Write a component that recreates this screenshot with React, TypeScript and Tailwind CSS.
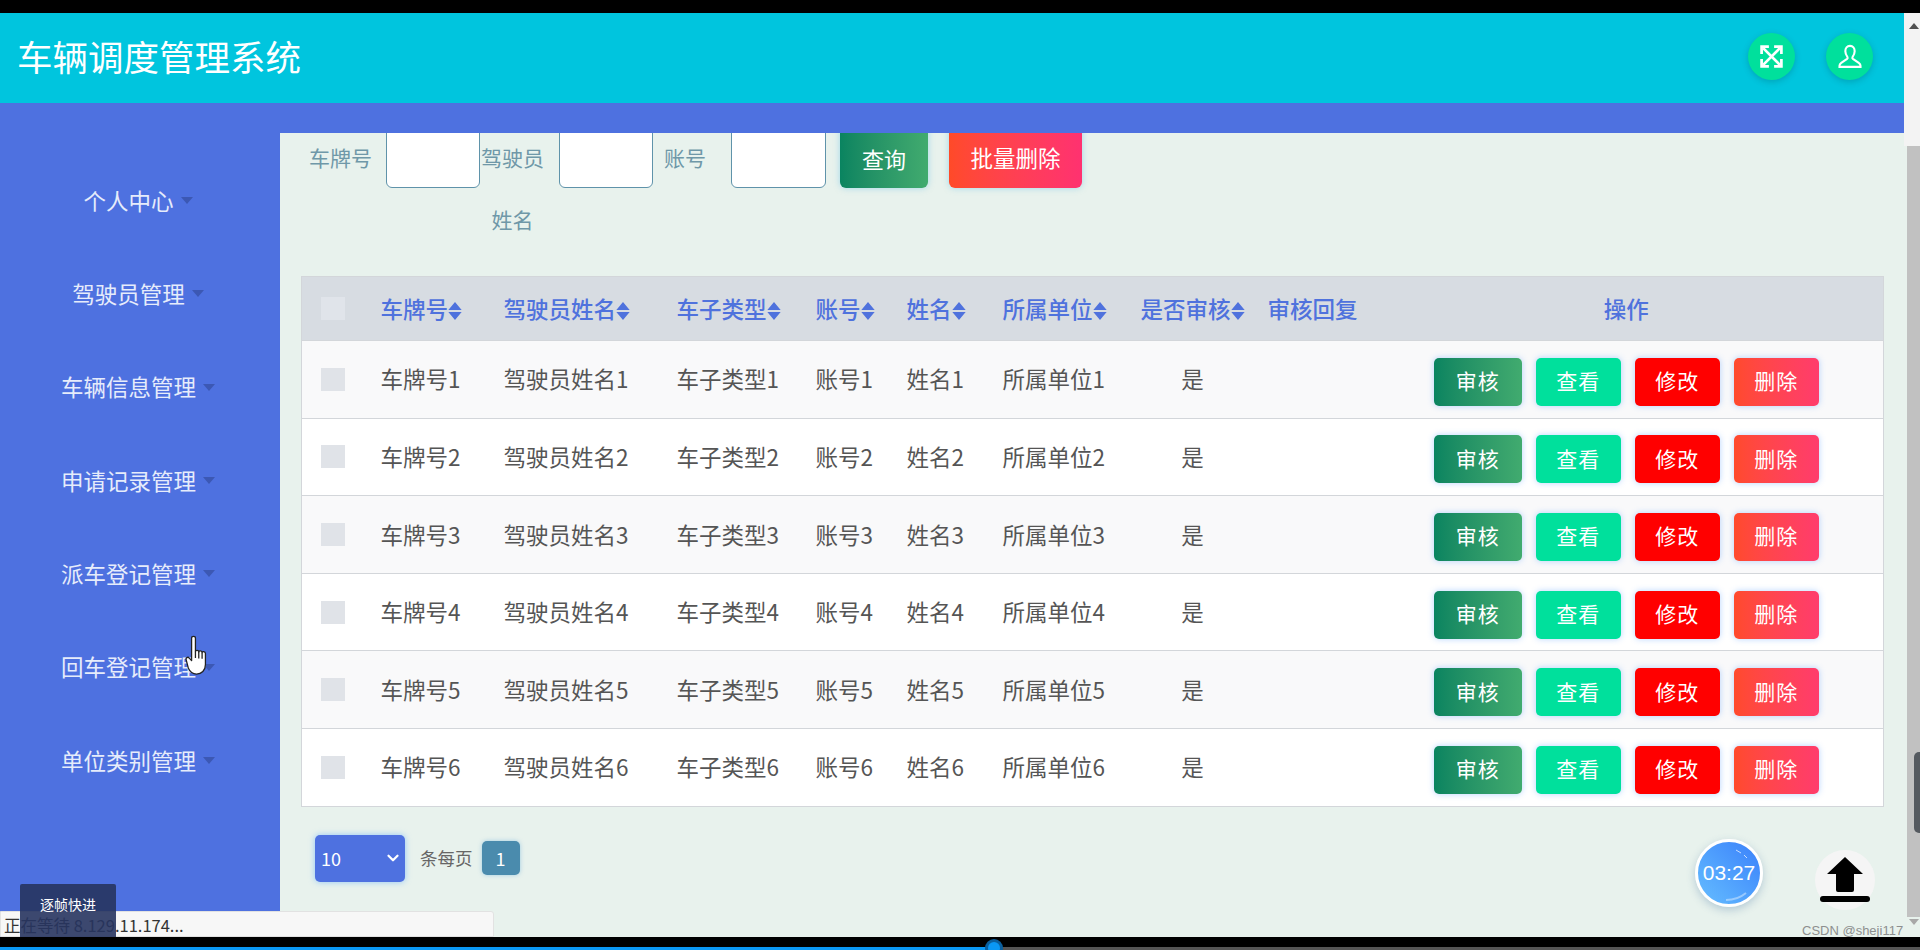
import { ChevronDown } from "lucide-react";

const menus = ["个人中心", "驾驶员管理", "车辆信息管理", "申请记录管理", "派车登记管理", "回车登记管理", "单位类别管理"];
const heads = ["车牌号", "驾驶员姓名", "车子类型", "账号", "姓名", "所属单位"];
const rows = [1, 2, 3, 4, 5, 6];
const btnBase = "h-12 rounded-[5px] text-white text-[21px] leading-none pb-[2px] tracking-[1px] shadow-[0_0_6px_rgba(90,160,255,0.45)]";

function SortCaret() {
  return (
    <svg width="16" height="20" viewBox="0 0 14 18" className="inline-block align-[-3px] -ml-[1px]">
      <path d="M7 1l6 7H1z M1 10h12l-6 7z" fill="#4f72dd" />
    </svg>
  );
}

function Th({ label }: { label: string }) {
  return (
    <th className="text-left font-medium whitespace-nowrap p-0">
      {label}
      <SortCaret />
    </th>
  );
}

function UserIcon() {
  return (
    <svg width="28" height="28" viewBox="0 0 24 24" fill="none" stroke="white" strokeWidth="1.8">
      <path d="M12 2.500c-2.500 0-4 2-4 4.500 0 2 .8 3.500 1.800 5 .3.500.2 1.200-.3 1.600l-5 3.400c-1 .7-1.500 1.600-1.500 2.500v1h18v-1c0-.9-.5-1.800-1.500-2.500l-5-3.400c-.5-.4-.6-1.100-.3-1.600 1-1.500 1.800-3 1.800-5 0-2.500-1.500-4.500-4-4.500z" />
    </svg>
  );
}

function FullscreenIcon() {
  return (
    <svg width="25" height="25" viewBox="0 0 24 24" fill="none" stroke="white" strokeWidth="2.6">
      <path d="M4 4l16 16M20 4L4 20" />
      <path d="M2.500 9.500V2.500h7M14.500 2.500h7v7M21.500 14.500v7h-7M9.500 21.500h-7v-7" />
    </svg>
  );
}

function HandCursor() {
  return (
    <svg className="absolute left-[185px] top-[622px]" width="26" height="41" viewBox="0 0 20 32" fill="white" stroke="#222222" strokeWidth="1" strokeLinejoin="round">
      <path d="M5 2.500c0-1.800 3-1.800 3 0V13c0-1.300 2.600-1.300 2.600.3 0-1.300 2.600-1.300 2.600.5 0-1.200 2.600-1 2.600.7V23c0 4.500-3 7.500-7 7.500-3 0-5-1.500-6.300-4.500L.8 19.500c-.7-1.700 1.300-2.800 2.400-1.500L5 20z" />
      <path d="M8 13v5M10.600 13.300v5M13.200 13.800v4.700" fill="none" />
    </svg>
  );
}

export default function App() {
  return (
    <div className="w-[1920px] h-[950px] bg-black flex flex-col overflow-hidden font-['Noto_Sans_CJK_SC','Noto_Sans',sans-serif]">
      <div className="h-[13px] shrink-0" />

      <div className="relative h-[924px] flex overflow-hidden">
        <div className="w-[1904px] flex flex-col">
          {/* top bar */}
          <header className="h-[90px] shrink-0 bg-[#00c5de] flex items-center justify-between pl-[17px] pr-[31px]">
            <h1 className="text-[35.500px] leading-none -mt-[5px] text-white font-normal">车辆调度管理系统</h1>
            <div className="flex items-center gap-[31px] -mt-[3px]">
              <div className="w-[47px] h-[47px] rounded-full bg-[#00e09c] shadow-[0_2px_6px_rgba(0,90,100,0.3)] flex items-center justify-center">
                <FullscreenIcon />
              </div>
              <div className="w-[47px] h-[47px] rounded-full bg-[#00e09c] shadow-[0_2px_6px_rgba(0,90,100,0.3)] flex items-center justify-center">
                <UserIcon />
              </div>
            </div>
          </header>
          <div className="h-[30px] shrink-0 bg-[#4e71e0]" />

          <div className="flex-1 flex min-h-0">
            {/* side menu */}
            <aside className="w-[280px] shrink-0 bg-[#4e71e0] pt-[21px]">
              {menus.map((m) => (
                <div key={m} className="h-[93.3px] flex items-center justify-center gap-[7px] pr-1 text-[22.500px] text-[#e6ecfb]">
                  <span>{m}</span>
                  <svg width="12" height="7" viewBox="0 0 12 7">
                    <path d="M0 0h12L6 7z" fill="#3c58b4" />
                  </svg>
                </div>
              ))}
            </aside>

            {/* page body */}
            <main className="flex-1 bg-[#e8f2ed] overflow-hidden">
              {/* search form, scrolled slightly under the band */}
              <div className="-mt-3 pl-[29px] flex items-start text-[21px] text-[#6f98a8] leading-[62px]">
                <span className="w-[63px] mt-[5px] whitespace-nowrap">车牌号</span>
                <div className="w-[94px] h-[67px] ml-[14px] bg-white border border-[#5f93aa] rounded-[6px]" />
                <span className="w-[63px] ml-[1px] mt-[5px] text-center">驾驶员姓名</span>
                <div className="w-[94px] h-[67px] ml-[15px] bg-white border border-[#5f93aa] rounded-[6px]" />
                <span className="w-[43px] ml-[11px] mt-[5px] whitespace-nowrap">账号</span>
                <div className="w-[95px] h-[67px] ml-[24px] bg-white border border-[#5f93aa] rounded-[6px]" />
                <button className="w-[88px] h-[67px] ml-[14px] rounded-[6px] bg-linear-to-r from-[#098460] to-[#41ab6f] text-white text-[22px] leading-none pt-[6px] shadow-[0_0_6px_rgba(90,190,230,0.5)]">
                  查询
                </button>
                <button className="w-[133px] h-[67px] ml-[21px] rounded-[6px] bg-linear-to-r from-[#ff4a28] to-[#ff3170] text-white text-[22.500px] leading-none pt-[6px] shadow-[0_0_6px_rgba(90,190,230,0.5)]">
                  批量删除
                </button>
              </div>

              {/* table */}
              <table className="table-fixed w-[1582px] ml-[21px] mt-[26px] border border-[#d3d6da] border-collapse text-[22.500px]">
                <colgroup>
                  <col className="w-[79px]" />
                  <col className="w-[123px]" />
                  <col className="w-[173px]" />
                  <col className="w-[139px]" />
                  <col className="w-[91px]" />
                  <col className="w-[96px]" />
                  <col className="w-[138px]" />
                  <col className="w-[127px]" />
                  <col className="w-[102px]" />
                  <col className="w-[514px]" />
                </colgroup>
                <thead>
                  <tr className="h-[64px] bg-[#d7dce2] text-[#4f72dd]">
                    <th className="p-0">
                      <div className="w-6 h-[23px] ml-[19px] bg-[#e0e4ea]" />
                    </th>
                    {heads.map((h) => (
                      <Th key={h} label={h} />
                    ))}
                    <th className="text-left font-medium whitespace-nowrap p-0">
                      是否审核
                      <SortCaret />
                    </th>
                    <th className="text-left font-medium whitespace-nowrap p-0">审核回复</th>
                    <th className="text-center font-medium p-0">操作</th>
                  </tr>
                </thead>
                <tbody className="text-[#555555]">
                  {rows.map((n) => (
                    <tr key={n} className={`h-[77.6px] border-t border-[#d3d6da] ${n % 2 ? "bg-[#f9f9fa]" : "bg-white"}`}>
                      <td className="p-0">
                        <div className="w-6 h-[23px] ml-[19px] bg-[#e0e3e8]" />
                      </td>
                      {heads.map((h) => (
                        <td key={h} className="p-0 whitespace-nowrap">
                          {h}
                          {n}
                        </td>
                      ))}
                      <td className="p-0">
                        <div className="w-[104px] text-center">是</div>
                      </td>
                      <td className="p-0" />
                      <td className="p-0">
                        <div className="mt-[5px] flex items-center justify-center gap-[14px]">
                          <button className={`${btnBase} w-[88px] bg-linear-to-r from-[#098460] to-[#41ab6f]`}>审核</button>
                          <button className={`${btnBase} w-[85px] bg-[#00e09c]`}>查看</button>
                          <button className={`${btnBase} w-[85px] bg-[#ff0000]`}>修改</button>
                          <button className={`${btnBase} w-[85px] bg-linear-to-r from-[#ff4a2c] to-[#ff3c6c]`}>删除</button>
                        </div>
                      </td>
                    </tr>
                  ))}
                </tbody>
              </table>

              {/* pager */}
              <div className="mt-[28px] ml-[35px] flex items-center">
                <div className="w-[90px] h-[47px] bg-[#4e71e0] rounded-[5px] flex items-center justify-between pl-[6px] pr-[3px] text-white text-[18px] shadow-[0_0_6px_rgba(90,170,255,0.6)]">
                  <span>10</span>
                  <ChevronDown size={18} color="white" strokeWidth={3} />
                </div>
                <span className="ml-[15px] text-[17.500px] text-[#666666]">条每页</span>
                <div className="w-[38px] h-[34px] ml-[9px] rounded-[5px] bg-[#4a8bad] flex items-center justify-center text-white text-[18px] shadow-[0_0_4px_rgba(90,170,220,0.5)]">
                  1
                </div>
              </div>
            </main>
          </div>
        </div>

        {/* browser scrollbar */}
        <div className="w-4 flex flex-col bg-[#e8f2ed]">
          <div className="h-[133px] bg-[#f3f3f3] flex justify-end pt-[10px] pr-[1px]">
            <svg width="10" height="6" viewBox="0 0 10 6">
              <path d="M5 0l5 6H0z" fill="#505050" />
            </svg>
          </div>
          <div className="h-[771px] w-[13px] ml-[3px] bg-[#c1c1c1]" />
          <div className="flex-1 flex justify-end pt-[2px] pr-[1px]">
            <svg width="10" height="6" viewBox="0 0 10 6">
              <path d="M0 0h10L5 6z" fill="#a8a8a8" />
            </svg>
          </div>
        </div>

        {/* things lying over the page */}
        <div className="absolute left-[1914px] top-[739px] w-[6px] h-[81px] bg-[#555a60] rounded-l-[5px]" />

        <div className="absolute left-[1695px] top-[826px] w-[68px] h-[68px] rounded-full border-[3px] border-white bg-linear-to-tr from-[#66bdff] to-[#3c80fa] shadow-[0_3px_8px_rgba(60,110,160,0.3)] flex items-center justify-center text-white text-[21px] font-['Liberation_Sans',sans-serif]">
          03:27
          <svg className="absolute inset-0" viewBox="0 0 62 62" fill="none" stroke="white" strokeOpacity="0.7" strokeWidth="1">
            <path d="M38 8l5 3M46 13l3 3" />
            <path d="M28 58c8 0 14-2 20-7" strokeOpacity="0.4" strokeWidth="2" />
          </svg>
        </div>

        <div className="absolute left-[1815px] top-[837px] w-[60px] h-[60px] rounded-full bg-[#f5f5f5] flex items-center justify-center">
          <svg width="50" height="46" viewBox="0 0 50 46">
            <path d="M25 0L43 17H34V33a2 2 0 0 1-2 2H18a2 2 0 0 1-2-2V17H7z" fill="black" />
            <rect x="0" y="39" width="50" height="6" rx="3" fill="black" />
          </svg>
        </div>

        <span className="absolute left-[1802px] top-[911px] text-[13px] leading-[13px] text-[#8d8f8f] font-['Liberation_Sans',sans-serif]">
          CSDN @sheji117
        </span>

        <div className="absolute left-0 top-[898px] w-[494px] h-[26px] bg-[#f7f7f7] border border-[#e2e2e2] rounded-tr-[3px] pl-[3px] text-[16.500px] leading-[26px] text-[#333333]">
          正在等待 8.129.11.174...
        </div>
        <div className="absolute left-5 top-[871px] w-24 h-[53px] bg-[#27345f]/90 rounded-t-[2px] flex justify-center pt-[7px] text-white text-[14px] leading-[26px]">
          逐帧快进
        </div>

        <HandCursor />
      </div>

      {/* video progress strip */}
      <div className="relative flex-1">
        <div className="absolute bottom-0 left-0 right-0 h-[3px] bg-[#555555]" />
        <div className="absolute bottom-0 left-0 w-[994px] h-[3px] bg-[#0a98f5]" />
        <div className="absolute left-[985px] top-[2px] w-[18px] h-[18px] rounded-full bg-[#0a5f9e] flex items-center justify-center">
          <div className="w-3 h-3 rounded-full bg-[#0a98f5]" />
        </div>
      </div>
    </div>
  );
}
